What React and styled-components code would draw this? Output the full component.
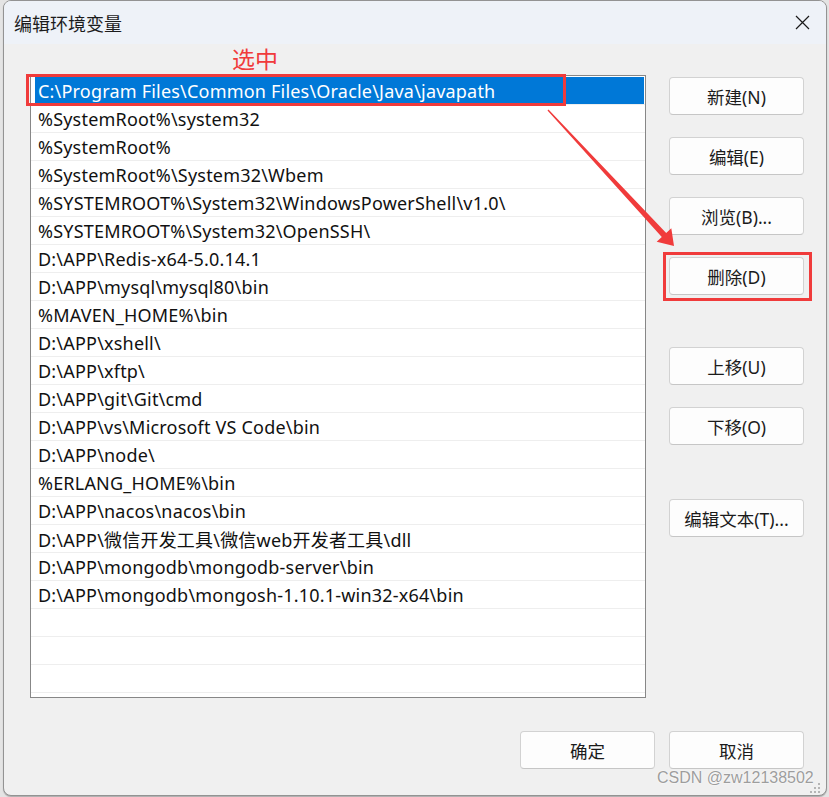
import React from "react";
import styled, { createGlobalStyle } from "styled-components";

const GlobalStyle = createGlobalStyle`
  html, body {
    margin: 0;
    padding: 0;
    background: #e4e4e4;
  }
  * {
    box-sizing: border-box;
  }
`;

const FONT = `"Noto Sans", "Noto Sans CJK SC", sans-serif`;
const RED = "#f03b3b";

const Page = styled.div`
  position: relative;
  width: 829px;
  height: 797px;
  overflow: hidden;
  font-family: ${FONT};
  color: #1a1a1a;
`;

const Window = styled.div`
  margin-left: 3px;
  width: 824px;
  height: 796px;
  background: #f0f0f0;
  border: 1px solid #939393;
  border-radius: 8px;
  box-shadow: 0 1px 1px rgba(0, 0, 0, 0.25);
  overflow: hidden;
  display: flex;
  flex-direction: column;
`;

const TitleBar = styled.div`
  height: 43px;
  flex-shrink: 0;
  background: #eef2f8;
  display: flex;
  align-items: center;
  justify-content: space-between;
  padding: 0 16px 0 10px;
`;

const Title = styled.div`
  font-size: 18px;
  color: #1c1c1c;
`;

const CloseButton = styled.div`
  width: 16px;
  height: 16px;
  display: flex;
  align-items: center;
  justify-content: center;
`;

const Content = styled.div`
  display: flex;
  padding: 31px 22px 0 26px;
  gap: 23px;
`;

const ListBox = styled.div`
  width: 616px;
  height: 623px;
  flex-shrink: 0;
  background: #ffffff;
  border: 1px solid #878787;
  padding-top: 1px;
  overflow: hidden;
`;

const Row = styled.div`
  height: 28px;
  padding-left: 7px;
  display: flex;
  align-items: center;
  font-size: 18px;
  letter-spacing: 0.2px;
  white-space: nowrap;
  border-bottom: 1px solid #eeeeee;
  color: ${({ $selected }) => ($selected ? "#ffffff" : "#111111")};
  background: ${({ $selected }) =>
    $selected
      ? "linear-gradient(to right, #ffffff 4px, #0078d7 4px, #0078d7 calc(100% - 1px), #ffffff calc(100% - 1px))"
      : "#ffffff"};
`;

const ButtonColumn = styled.div`
  display: flex;
  flex-direction: column;
  padding-top: 2px;
`;

const Button = styled.div`
  width: 135px;
  height: 38px;
  margin-top: ${({ $gap }) => $gap}px;
  background: #fdfdfd;
  border: 1px solid #d2d2d2;
  border-bottom-color: #c6c6c6;
  border-radius: 4px;
  display: flex;
  align-items: center;
  justify-content: center;
  font-size: 17.5px;
  color: #1b1b1b;
`;

const Footer = styled.div`
  display: flex;
  justify-content: flex-end;
  gap: 14px;
  padding: 33px 22px 0 0;
`;

const Label = styled.div`
  position: absolute;
  left: 232px;
  top: 45px;
  font-size: 23px;
  line-height: 28px;
  color: ${RED};
`;

const Highlight = styled.div`
  position: absolute;
  border: 3px solid ${RED};
`;

const Overlay = styled.svg`
  position: absolute;
  left: 0;
  top: 0;
  pointer-events: none;
`;

const Watermark = styled.div`
  position: absolute;
  left: 657px;
  top: 768px;
  font-family: "Liberation Sans", Arial, sans-serif;
  font-size: 16px;
  line-height: 20px;
  color: #9d9d9d;
  text-shadow: 0 0 2px #ffffff, 0 0 1px #ffffff;
`;

const paths = [
  String.raw`C:\Program Files\Common Files\Oracle\Java\javapath`,
  String.raw`%SystemRoot%\system32`,
  String.raw`%SystemRoot%`,
  String.raw`%SystemRoot%\System32\Wbem`,
  String.raw`%SYSTEMROOT%\System32\WindowsPowerShell\v1.0\ `.trim(),
  String.raw`%SYSTEMROOT%\System32\OpenSSH\ `.trim(),
  String.raw`D:\APP\Redis-x64-5.0.14.1`,
  String.raw`D:\APP\mysql\mysql80\bin`,
  String.raw`%MAVEN_HOME%\bin`,
  String.raw`D:\APP\xshell\ `.trim(),
  String.raw`D:\APP\xftp\ `.trim(),
  String.raw`D:\APP\git\Git\cmd`,
  String.raw`D:\APP\vs\Microsoft VS Code\bin`,
  String.raw`D:\APP\node\ `.trim(),
  String.raw`%ERLANG_HOME%\bin`,
  String.raw`D:\APP\nacos\nacos\bin`,
  String.raw`D:\APP\微信开发工具\微信web开发者工具\dll`,
  String.raw`D:\APP\mongodb\mongodb-server\bin`,
  String.raw`D:\APP\mongodb\mongosh-1.10.1-win32-x64\bin`,
];

const sideButtons = [
  { text: "新建(N)", gap: 0 },
  { text: "编辑(E)", gap: 22 },
  { text: "浏览(B)...", gap: 22 },
  { text: "删除(D)", gap: 22 },
  { text: "上移(U)", gap: 52 },
  { text: "下移(O)", gap: 22 },
  { text: "编辑文本(T)...", gap: 54 },
];

const rows = [...paths, "", "", "", ""];

const App = () => {
  return (
    <Page>
      <GlobalStyle />
      <Window>
        <TitleBar>
          <Title>编辑环境变量</Title>
          <CloseButton>
            <svg width="15" height="15" viewBox="0 0 15 15">
              <path d="M1 1 L14 14 M14 1 L1 14" stroke="#1a1a1a" strokeWidth="1.2" />
            </svg>
          </CloseButton>
        </TitleBar>
        <Content>
          <ListBox>
            {rows.map((p, i) => (
              <Row key={i} $selected={i === 0}>
                {p}
              </Row>
            ))}
          </ListBox>
          <ButtonColumn>
            {sideButtons.map((b) => (
              <Button key={b.text} $gap={b.gap}>
                {b.text}
              </Button>
            ))}
          </ButtonColumn>
        </Content>
        <Footer>
          <Button>确定</Button>
          <Button>取消</Button>
        </Footer>
      </Window>

      <Label>选中</Label>
      <Highlight style={{ left: 26, top: 74, width: 540, height: 32 }} />
      <Highlight style={{ left: 663, top: 252, width: 149, height: 49 }} />
      <Overlay width="829" height="797" viewBox="0 0 829 797">
        <polygon
          points="548.5,109.5 666.2,233 671.3,228.2 674,246 656.7,241.8 661.8,237 547.5,110.5"
          fill={RED}
        />
        <g fill="#b5b5b5">
          <rect x="818" y="783" width="2" height="2" />
          <rect x="814" y="787" width="2" height="2" />
          <rect x="818" y="787" width="2" height="2" />
          <rect x="810" y="791" width="2" height="2" />
          <rect x="814" y="791" width="2" height="2" />
          <rect x="818" y="791" width="2" height="2" />
        </g>
      </Overlay>
      <Watermark>CSDN @zw12138502</Watermark>
    </Page>
  );
};

export default App;
